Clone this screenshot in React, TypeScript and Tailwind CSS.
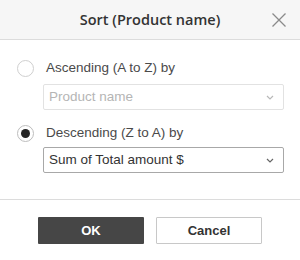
import React from "react";

const Chevron = ({ color }: { color: string }) => (
  <svg width="8" height="5" viewBox="0 0 8 5" fill="none">
    <path d="M1 1 L4 4 L7 1" stroke={color} strokeWidth="1.2" />
  </svg>
);

export default function App() {
  return (
    <div
      className="w-[300px] h-[260px] bg-white flex flex-col overflow-hidden"
      style={{ fontFamily: '"Liberation Sans", Arial, sans-serif' }}
    >
      <div className="h-[40px] shrink-0 bg-[#f6f6f6] border-b border-[#dcdcdc] grid grid-cols-[1fr_auto_1fr] items-center">
        <div />
        <div
          className="text-[14.5px] font-semibold text-[#333]"
          style={{ fontFamily: '"Open Sans", sans-serif' }}
        >
          Sort (Product name)
        </div>
        <div className="flex justify-end pr-[14px]">
          <svg width="14" height="14" viewBox="0 0 14 14">
            <path d="M0.5 0.5 L13.5 13.5 M13.5 0.5 L0.5 13.5" stroke="#8a8a8a" strokeWidth="1.3" />
          </svg>
        </div>
      </div>

      <div className="flex flex-col pl-[17px] pt-[20px]">
        <div className="flex items-center h-[17px]">
          <div className="w-[17px] h-[17px] rounded-full border border-[#cfcfcf] bg-white" />
          <span className="ml-[12px] text-[13.5px] text-[#4a4a4a]">Ascending (A to Z) by</span>
        </div>
        <div className="ml-[26px] mt-[7px] w-[241px] h-[26px] border border-[#e2e2e2] rounded-[2px] flex items-center justify-between pl-[5px] pr-[9px]">
          <span className="text-[13.5px] text-[#b5b5b5]">Product name</span>
          <Chevron color="#b8b8b8" />
        </div>

        <div className="flex items-center h-[17px] mt-[15px]">
          <div className="w-[17px] h-[17px] rounded-full border border-[#bdbdbd] bg-white flex items-center justify-center">
            <div className="w-[9px] h-[9px] rounded-full bg-[#262626]" />
          </div>
          <span className="ml-[12px] text-[13.5px] text-[#4a4a4a]">Descending (Z to A) by</span>
        </div>
        <div className="ml-[26px] mt-[5px] w-[241px] h-[26px] border border-[#a8a8a8] rounded-[2px] flex items-center justify-between pl-[5px] pr-[9px]">
          <span className="text-[13.5px] text-[#333]">Sum of Total amount $</span>
          <Chevron color="#666" />
        </div>
      </div>

      <div className="mt-[26px] border-t border-[#dcdcdc]" />

      <div className="flex justify-center gap-[12px] mt-[17px]">
        <div className="w-[106px] h-[27px] bg-[#464646] flex items-center justify-center text-white text-[13px] font-bold rounded-[1px]">
          OK
        </div>
        <div className="w-[106px] h-[27px] bg-white border border-[#c8c8c8] flex items-center justify-center text-[#333] text-[13px] font-bold rounded-[1px]">
          Cancel
        </div>
      </div>
    </div>
  );
}
